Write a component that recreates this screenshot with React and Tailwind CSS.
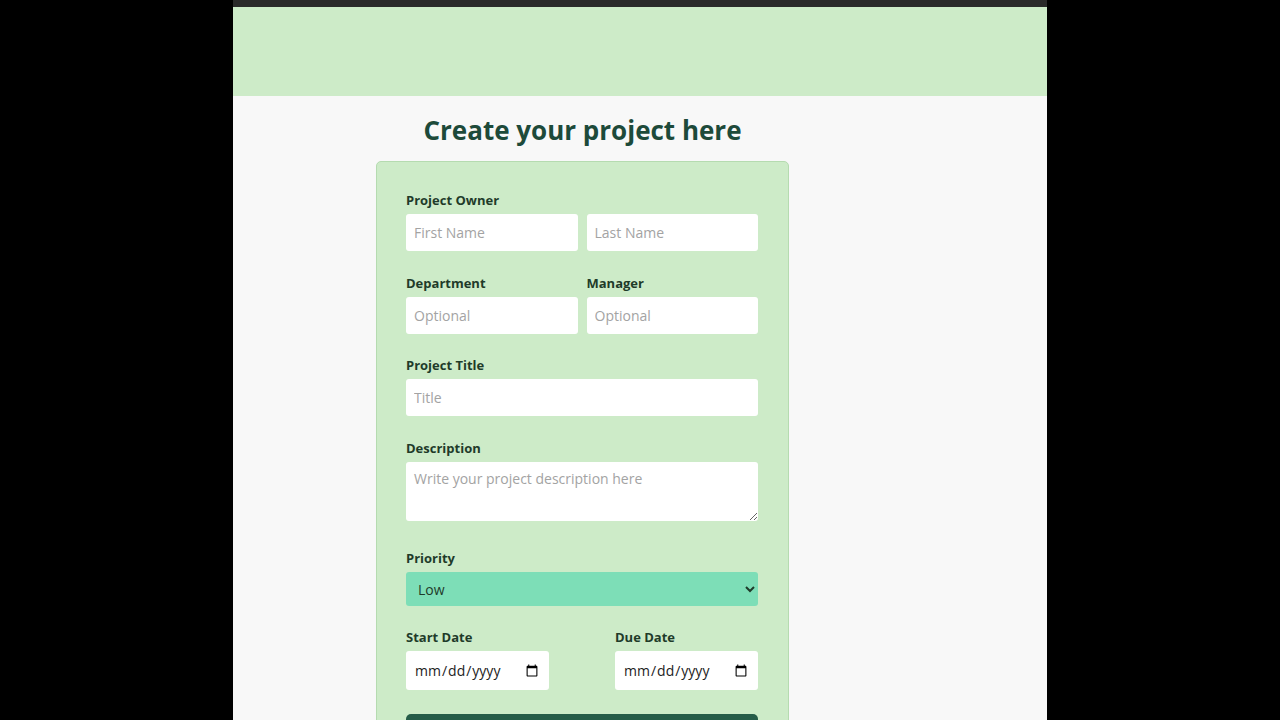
import { useState } from "react";

const font = { fontFamily: '"Open Sans", "Noto Sans", sans-serif' };

function Label({ children }) {
    return <label className="block text-[13px] font-bold text-[#1f3b2a] mb-[5px] leading-[18px]">{children}</label>;
}

function TextInput({ placeholder }) {
    return (
        <input
            type="text"
            placeholder={placeholder}
            className="w-full h-[37px] bg-white rounded-[3px] px-2 text-[14px] text-gray-700 placeholder:text-[#a3a3a3] outline-none"
        />
    );
}

export default function App() {
    const [priority, setPriority] = useState("Low");

    return (
        <div className="min-h-screen bg-black flex justify-center" style={font}>
            <div className="w-[814px] min-h-screen bg-[#f8f8f8] flex flex-col">
                <div className="h-[7px] bg-[#2a2a2a]" />
                <header className="h-[89px] bg-[#cdebc8]" />

                <div className="ml-[143px] w-[413px] flex flex-col">
                    <h1 className="text-center text-[26px] font-bold text-[#1d4a3a] mt-[15px] leading-[38px]">
                        Create your project here
                    </h1>

                    <form className="mt-[12px] bg-[#cdebc8] border border-[#b5dbb0] rounded-[5px] pl-[29px] pr-[30px] pt-[29px] pb-6 flex flex-col">
                        <Label>Project Owner</Label>
                        <div className="flex gap-[9px]">
                            <TextInput placeholder="First Name" />
                            <TextInput placeholder="Last Name" />
                        </div>

                        <div className="flex gap-[9px] mt-[23px]">
                            <div className="flex-1">
                                <Label>Department</Label>
                                <TextInput placeholder="Optional" />
                            </div>
                            <div className="flex-1">
                                <Label>Manager</Label>
                                <TextInput placeholder="Optional" />
                            </div>
                        </div>

                        <div className="mt-[22px]">
                            <Label>Project Title</Label>
                            <TextInput placeholder="Title" />
                        </div>

                        <div className="mt-[23px]">
                            <Label>Description</Label>
                            <textarea
                                placeholder="Write your project description here"
                                className="w-full h-[59px] bg-white rounded-[3px] px-2 py-[6px] text-[14px] text-gray-700 placeholder:text-[#a3a3a3] outline-none block"
                            />
                        </div>

                        <div className="mt-[28px]">
                            <Label>Priority</Label>
                            <select
                                value={priority}
                                onChange={(e) => setPriority(e.target.value)}
                                className="w-full h-[34px] bg-[#7ddeb7] rounded-[3px] px-2 text-[14px] text-[#1f3b2a] outline-none"
                            >
                                <option>Low</option>
                                <option>Medium</option>
                                <option>High</option>
                            </select>
                        </div>

                        <div className="flex justify-between mt-[22px]">
                            <div>
                                <Label>Start Date</Label>
                                <input type="date" className="w-[143px] h-[39px] bg-white rounded-[3px] px-2 text-[14px] text-[#222] outline-none" />
                            </div>
                            <div>
                                <Label>Due Date</Label>
                                <input type="date" className="w-[143px] h-[39px] bg-white rounded-[3px] px-2 text-[14px] text-[#222] outline-none" />
                            </div>
                        </div>

                        <button type="button" className="mt-[24px] h-[40px] w-full rounded-[5px] bg-[#255c48] text-white text-[15px] font-bold">
                            Create Project
                        </button>
                    </form>
                </div>
            </div>
        </div>
    );
}
